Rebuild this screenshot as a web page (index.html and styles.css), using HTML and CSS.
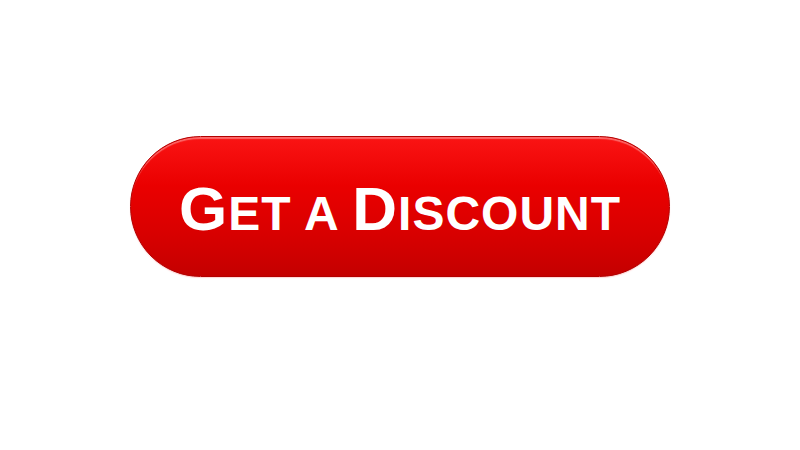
FILE: index.html
```html
<!DOCTYPE html>
<html lang="en">
<head>
  <meta charset="UTF-8" />
  <meta name="viewport" content="width=device-width, initial-scale=1.0"/>
  <title>Get a Discount</title>
  <link rel="stylesheet" href="styles.css">
</head>
<body>
  <div class="stage">
    <button type="button" class="discount-btn">
      <span class="label"><span class="cap">G</span>et a <span class="cap">D</span>iscount</span>
    </button>
  </div>
</body>
</html>
```

FILE: styles.css
```css
:root {
  --red-top: #fa1414;
  --red-mid: #ea0000;
  --red-bottom: #c40000;
  --red-edge: #b30000;
  --text: #ffffff;
}

* {
  margin: 0;
  padding: 0;
  box-sizing: border-box;
}

body {
  background: #ffffff;
  font-family: 'Liberation Sans', Arial, sans-serif;
  width: 800px;
  height: 450px;
  overflow: hidden;
}

.stage {
  display: flex;
  justify-content: center;
  padding-top: 136px;
}

.discount-btn {
  width: 540px;
  height: 141px;
  border-radius: 71px;
  border: 1px solid var(--red-edge);
  background: linear-gradient(180deg, var(--red-top) 0%, var(--red-mid) 35%, #d80000 70%, var(--red-bottom) 100%);
  box-shadow:
    inset 0 3px 1px -1px rgba(255, 190, 190, 0.5),
    0 1px 1px rgba(255, 170, 170, 0.5);
  color: var(--text);
  font-family: 'Liberation Sans', Arial, sans-serif;
  font-weight: bold;
  display: flex;
  align-items: center;
  justify-content: center;
  padding-top: 6px;
  cursor: pointer;
}

.label {
  font-size: 48px;
  text-transform: uppercase;
  letter-spacing: 1px;
  white-space: nowrap;
}

.cap {
  font-size: 62px;
  line-height: 1;
}
```
